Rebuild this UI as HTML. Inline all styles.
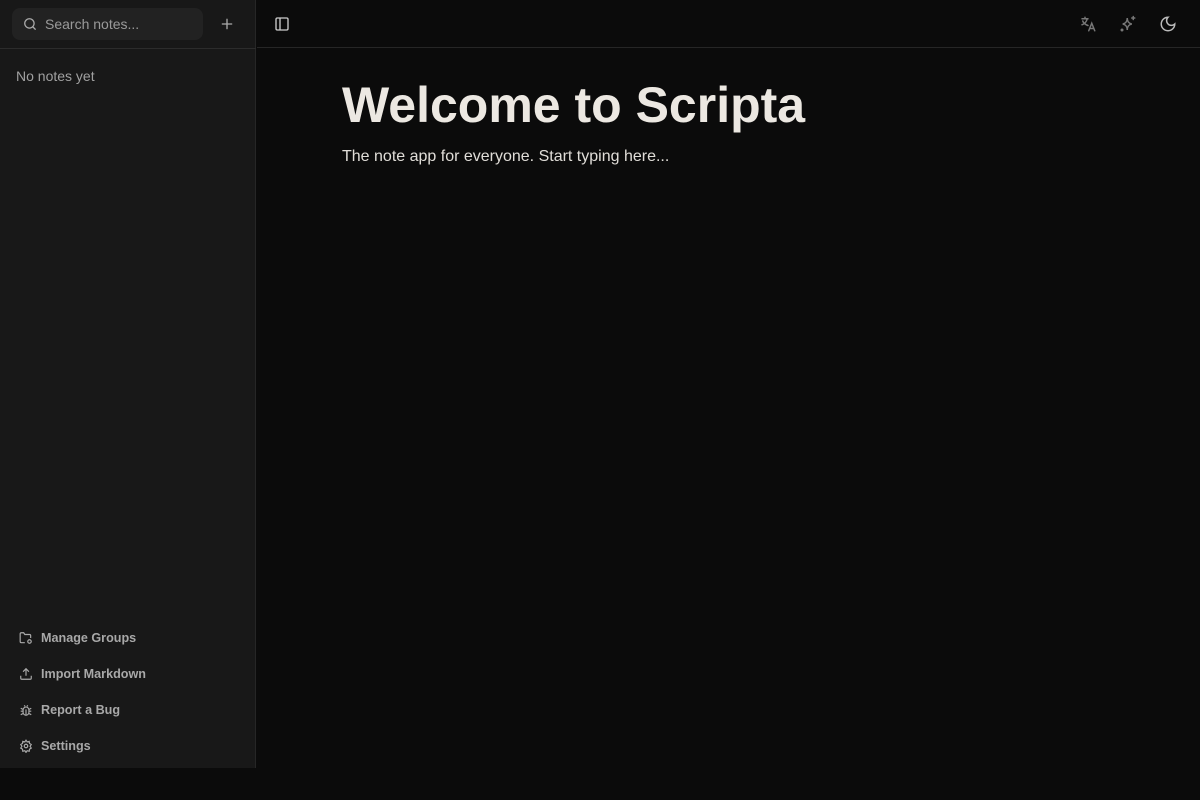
<!DOCTYPE html>
<html><head><style>
*{margin:0;padding:0;box-sizing:border-box}
body{width:1200px;height:800px;background:#0b0b0b;font-family:"Liberation Sans",sans-serif;position:relative;overflow:hidden}
.sb{position:absolute;left:0;top:0;width:256px;height:768px;background:#181818;border-right:1px solid #262626}
.search{position:absolute;left:12px;top:8px;width:191px;height:32px;background:#222;border-radius:8px;color:#9a9a9a;font-size:14px;line-height:32px;padding-left:33px}
.search svg{position:absolute;left:11px;top:9px}
.plus{position:absolute;left:219px;top:16px}
.hline{position:absolute;left:0;top:48px;width:256px;height:1px;background:#2c2c2c}
.empty{position:absolute;left:16px;top:68px;color:#a0a0a0;font-size:14px}
.item{position:absolute;left:19px;color:#a8a8a8;font-size:12.6px;font-weight:bold;display:flex;align-items:center}
.item svg{margin-right:8px}
.top{position:absolute;left:257px;top:47px;width:943px;height:1px;background:#262626}
h1{position:absolute;left:342px;top:76px;font-size:50px;color:#ece8e2;font-weight:bold;letter-spacing:0px}
p{position:absolute;left:342px;top:148px;font-size:16px;color:#e0ddd8}
</style></head><body>
<div class="sb">
<div class="search"><svg width="14" height="14" viewBox="0 0 24 24" fill="none" stroke="#aaa" stroke-width="2.2" stroke-linecap="round"><circle cx="11" cy="11" r="8"/><path d="M21 21l-4.3-4.3"/></svg>Search notes...</div>
<svg class="plus" width="16" height="16" viewBox="0 0 24 24" fill="none" stroke="#aaa" stroke-width="2" stroke-linecap="round"><path d="M12 5v14M5 12h14"/></svg>
<div class="hline"></div>
<div class="empty">No notes yet</div>
<div class="item" style="top:631px"><svg width="14" height="14" viewBox="0 0 24 24" fill="none" stroke="#aaa" stroke-width="2"><path d="M10 20H4a2 2 0 0 1-2-2V5a2 2 0 0 1 2-2h4l2 3h8a2 2 0 0 1 2 2v4"/><circle cx="18" cy="18" r="3"/></svg>Manage Groups</div>
<div class="item" style="top:667px"><svg width="14" height="14" viewBox="0 0 24 24" fill="none" stroke="#aaa" stroke-width="2"><path d="M21 15v4a2 2 0 0 1-2 2H5a2 2 0 0 1-2-2v-4M17 8l-5-5-5 5M12 3v12"/></svg>Import Markdown</div>
<div class="item" style="top:703px"><svg width="14" height="14" viewBox="0 0 24 24" fill="none" stroke="#aaa" stroke-width="2"><rect x="7" y="7" width="10" height="14" rx="5"/><path d="M9 4l1.5 2M15 4l-1.5 2M3 9l4 2M21 9l-4 2M3 14h4M21 14h-4M3 20l4-2M21 20l-4-2M12 11v10"/></svg>Report a Bug</div>
<div class="item" style="top:739px"><svg width="14" height="14" viewBox="0 0 24 24" fill="none" stroke="#aaa" stroke-width="2"><circle cx="12" cy="12" r="3"/><path d="M12 2l2 3 3.5-1 .5 3.5 3 2-2 3 2 3-3 2-.5 3.5-3.5-1-2 3-2-3-3.5 1-.5-3.5-3-2 2-3-2-3 3-2 .5-3.5 3.5 1z"/></svg>Settings</div>
</div>
<svg style="position:absolute;left:274px;top:16px" width="16" height="16" viewBox="0 0 24 24" fill="none" stroke="#ccc" stroke-width="2"><rect x="3" y="3" width="18" height="18" rx="2"/><path d="M9 3v18"/></svg>
<svg style="position:absolute;left:1079px;top:15px" width="18" height="18" viewBox="0 0 24 24" fill="none" stroke="#777" stroke-width="2" stroke-linecap="round"><path d="M4 5h8M8 3v2M5 8c1 3 4 5 7 6M11 5c-1 4-4 7-7 8M13 21l4-10 4 10M14.5 18h5"/></svg>
<svg style="position:absolute;left:1119px;top:15px" width="18" height="18" viewBox="0 0 24 24" fill="none" stroke="#777" stroke-width="2" stroke-linecap="round"><path d="M11 4c0 5 2 7 6 8-4 1-6 3-6 8 0-5-2-7-6-8 4-1 6-3 6-8zM19 2v4M17 4h4"/><circle cx="4" cy="20" r="1"/></svg>
<svg style="position:absolute;left:1159px;top:15px" width="18" height="18" viewBox="0 0 24 24" fill="none" stroke="#bbb" stroke-width="2"><path d="M12 3a6 6 0 0 0 9 9 9 9 0 1 1-9-9z"/></svg>
<div class="top"></div>
<h1>Welcome to Scripta</h1>
<p>The note app for everyone. Start typing here...</p>
</body></html>
